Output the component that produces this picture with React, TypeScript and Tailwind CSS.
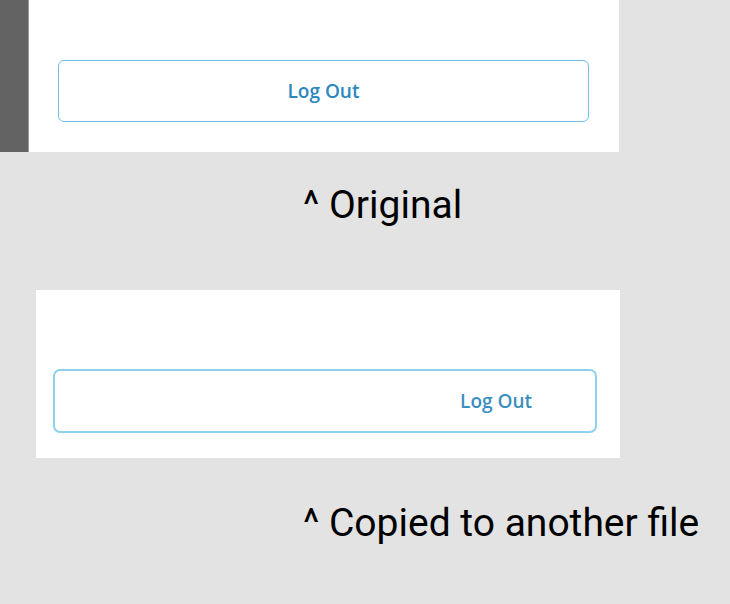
import React from "react";

export default function App() {
  return (
    <div className="w-[730px] h-[604px] bg-[#e3e3e3] overflow-hidden flex flex-col">
      <div className="flex h-[152px]">
        <div className="w-[29px] bg-[#636363] border-r border-[#9a9a9a]" />
        <div className="w-[590px] bg-white pt-[60px] pl-[29px]">
          <button className="w-[531px] h-[62px] rounded-[6px] border-[1.5px] border-[#6cc0e8] flex items-center justify-center text-[#2a88bd] text-[19px] font-semibold" style={{ fontFamily: '"Open Sans", sans-serif' }}>
            Log Out
          </button>
        </div>
      </div>
      <div className="pl-[303px] pt-[29px] h-[138px] text-[39px] text-black leading-[48px]" style={{ fontFamily: 'Roboto, sans-serif' }}>
        ^ Original
      </div>
      <div className="ml-[36px] w-[584px] h-[168px] bg-white pt-[79px] pl-[17px]">
        <button className="w-[544px] h-[64px] rounded-[7px] border-2 border-[#8fd0ef] flex items-center justify-end pr-[63px] text-[#3a8fbf] text-[19px] font-semibold" style={{ fontFamily: '"Open Sans", sans-serif' }}>
          Log Out
        </button>
      </div>
      <div className="pl-[303px] pt-[41px] text-[39px] text-black leading-[48px]" style={{ fontFamily: 'Roboto, sans-serif' }}>
        ^ Copied to another file
      </div>
    </div>
  );
}
